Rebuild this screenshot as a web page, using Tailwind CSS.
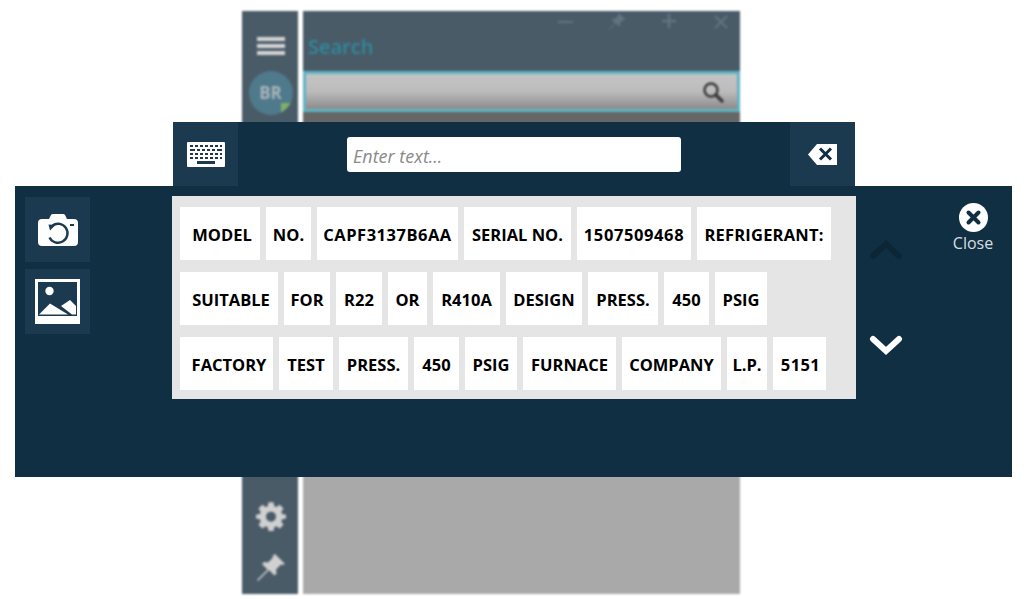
<!DOCTYPE html>
<html lang="en">

<head>
    <meta charset="UTF-8">
    <title>Search keyboard</title>
    <script src="https://cdn.jsdelivr.net/npm/@tailwindcss/browser@4"></script>
</head>

<body class="bg-white">
    <div class="relative w-[1024px] h-[599px] overflow-hidden bg-white font-['Open_Sans',sans-serif]">

        <!-- Blurred window behind the overlay -->
        <div class="absolute left-[242px] top-[11px] w-[498px] h-[583px] flex gap-[5px] blur-[1.2px]">
            <div class="w-[56px] bg-[#4a5b68] flex flex-col items-center">
                <div class="mt-[26px] ml-[1px] w-[28px] flex flex-col gap-[3px]">
                    <div class="h-[4px] bg-[#d4d4d4]"></div>
                    <div class="h-[4px] bg-[#d4d4d4]"></div>
                    <div class="h-[4px] bg-[#d4d4d4]"></div>
                </div>
                <div class="relative mt-[16px] ml-[1px] w-[44px] h-[44px] rounded-full overflow-hidden bg-[#4f7a8c] flex items-center justify-center text-[17px] font-bold text-[#a9b4ba]">
                    BR
                    <div class="absolute left-[32px] top-[32px] w-[14px] h-[14px] bg-[#7fae6a]"></div>
                </div>
                <div class="flex-1"></div>
                <svg class="w-[30px] h-[30px] mb-[22px] ml-[2px] text-[#d0d0d0]" viewBox="0 0 24 24" fill="currentColor">
                    <path fill-rule="evenodd" d="M10 1h4l.6 3.1 1.7.7L19 3l3 3-1.800 2.700.7 1.700L24 11v3l-3.100.6-.7 1.700L22 19l-3 3-2.700-1.800-1.700.7L14 24h-4l-.6-3.100-1.700-.7L5 22l-3-3 1.800-2.700-.7-1.700L0 14v-3l3.100-.6.7-1.700L2 6l3-3 2.700 1.800 1.700-.7zM12 8.500a4 4 0 1 0 0 8 4 4 0 0 0 0-8z" />
                </svg>
                <svg class="w-[30px] h-[30px] mb-[11px] ml-[2px] text-[#d0d0d0]" viewBox="0 0 30 30" fill="currentColor">
                    <path d="M19 1l10 10-2.500 1-1.500-.5-5 5 .5 4-2 2-5.500-5.500L2 28l-1-1 10.500-10.500L6 11l2-2 4 .5 5-5-.5-1.500z" />
                </svg>
            </div>
            <div class="flex-1 flex flex-col bg-[#a9a9a9]">
                <div class="relative h-[60px] bg-[#4a5b68]">
                    <div class="absolute left-[5px] top-[21px] text-[20px] leading-[30px] font-semibold text-[#2f8a9c]">Search</div>
                    <div class="absolute left-[255px] top-[10px] w-[15px] h-[2px] bg-[#5f7480]"></div>
                    <svg class="absolute left-[305px] top-[2px] w-[18px] h-[18px] text-[#5f7480]" viewBox="0 0 30 30" fill="currentColor">
                        <path d="M19 1l10 10-2.500 1-1.500-.5-5 5 .5 4-2 2-5.500-5.500L2 28l-1-1 10.500-10.500L6 11l2-2 4 .5 5-5-.5-1.500z" />
                    </svg>
                    <svg class="absolute left-[358px] top-[2px] w-[16px] h-[16px] text-[#5f7480]" viewBox="0 0 16 16" fill="none" stroke="currentColor" stroke-width="2.500">
                        <path d="M8 1v14M1 8h14" />
                    </svg>
                    <svg class="absolute left-[411px] top-[4px] w-[14px] h-[14px] text-[#5f7480]" viewBox="0 0 14 14" fill="none" stroke="currentColor" stroke-width="2">
                        <path d="M1 1l12 12M13 1L1 13" />
                    </svg>
                </div>
                <div class="h-[41px] border-[3px] border-[#5fb2c4] bg-linear-to-b from-[#c4c4c4] via-[#bcbcbc] to-[#8c8c8c] flex items-center justify-end pr-[12px]">
                    <svg class="w-[24px] h-[24px] text-[#3a3a3a]" viewBox="0 0 24 24" fill="none" stroke="currentColor">
                        <circle cx="10" cy="10" r="6.500" stroke-width="2.500" />
                        <path d="M15 15l6 6" stroke-width="3.500" stroke-linecap="round" />
                    </svg>
                </div>
                <div class="h-[12px] bg-[#666666]"></div>
            </div>
        </div>

        <!-- Text entry bar -->
        <div class="absolute left-[173px] top-[122px] w-[682px] h-[65px] bg-[#112f42] flex items-center justify-between">
            <div class="w-[65px] h-[65px] bg-[#1b3a4f] flex items-center justify-center">
                <svg class="w-[38px] h-[25px]" viewBox="0 0 38 25">
                    <rect width="38" height="25" rx="1" fill="#ffffff" />
                    <g fill="#1b3a4f">
                        <path d="M3 3h3v2H3zM8 3h3v2H8zM13 3h3v2h-3zM18 3h3v2h-3zM23 3h3v2h-3zM28 3h3v2h-3zM33 3h2v2h-2z" />
                        <path d="M3 7h5v2H3zM10 7h3v2h-3zM15 7h3v2h-3zM20 7h3v2h-3zM25 7h3v2h-3zM30 7h5v2h-5z" />
                        <path d="M3 11h3v2H3zM8 11h3v2H8zM13 11h3v2h-3zM18 11h3v2h-3zM23 11h3v2h-3zM28 11h3v2h-3zM33 11h2v2h-2z" />
                        <path d="M3 15h3v2H3zM8 15h3v2H8zM13 15h3v2h-3zM18 15h3v2h-3zM23 15h3v2h-3zM28 15h3v2h-3zM33 15h2v2h-2z" />
                        <path d="M10 19h18v3H10z" />
                    </g>
                </svg>
            </div>
            <div class="w-[334px] h-[35px] rounded-[3px] bg-white flex items-center pl-[6px] pt-[3px] text-[18px] italic text-[#8a8a8a]">Enter text...</div>
            <div class="w-[65px] h-[65px] bg-[#1b3a4f] flex items-center justify-center">
                <svg class="w-[29px] h-[21px]" viewBox="0 0 29 21">
                    <path d="M9 0h20v21H9L0 10.500z" fill="#ffffff" />
                    <path d="M12 4.500l11 11M23 4.500l-11 11" stroke="#112f42" stroke-width="3" fill="none" />
                </svg>
            </div>
        </div>

        <!-- Main panel -->
        <div class="absolute left-[15px] top-[186px] w-[997px] h-[291px] bg-[#112f42] flex">
            <div class="w-[157px] pl-[10px] pt-[11px] flex flex-col gap-[7px]">
                <div class="w-[65px] h-[65px] bg-[#1b3a4f] flex items-center justify-center">
                    <svg class="w-[40px] h-[32px]" viewBox="0 0 40 32">
                        <path d="M4 5h7l2-4q.5-1 2-1h10q1.500 0 2 1l2 4h7q4 0 4 4v19q0 4-4 4H4q-4 0-4-4V9q0-4 4-4z" fill="#ffffff" />
                        <path d="M14.500 11.500a9.500 9.500 0 1 1-3 12" fill="none" stroke="#1b3a4f" stroke-width="2.400" />
                        <path d="M10.500 10.500l7 .5-5.500 5.500z" fill="#1b3a4f" />
                        <rect x="32" y="10" width="4" height="2" fill="#1b3a4f" />
                    </svg>
                </div>
                <div class="w-[65px] h-[65px] bg-[#1b3a4f] flex items-center justify-center">
                    <svg class="w-[45px] h-[45px]" viewBox="0 0 45 45">
                        <rect width="45" height="45" fill="#ffffff" />
                        <rect x="3" y="3" width="39" height="34" fill="#1b3a4f" />
                        <circle cx="14.500" cy="12" r="4.200" fill="#ffffff" />
                        <path d="M4 35.500l11-11 18 11z" fill="#ffffff" />
                        <path d="M26 27l9-6 6 6v8.500h-4z" fill="#ffffff" />
                    </svg>
                </div>
            </div>

            <!-- Recognised words -->
            <div class="mt-[10px] w-[684px] h-[203px] bg-[#e5e5e5] pt-[11px] pl-[8px] flex flex-col gap-[12px] text-[16.500px] font-bold text-black">
                <div class="flex gap-[6px]">
                    <div class="w-[80px] h-[53px] bg-white flex items-center justify-center pt-[3px] pl-[4px]">MODEL</div>
                    <div class="w-[45px] h-[53px] bg-white flex items-center justify-center pt-[3px]">NO.</div>
                    <div class="w-[141px] h-[53px] bg-white flex items-center justify-center pt-[3px] tracking-[0.5px]">CAPF3137B6AA</div>
                    <div class="w-[107px] h-[53px] bg-white flex items-center justify-center pt-[3px]">SERIAL NO.</div>
                    <div class="w-[114px] h-[53px] bg-white flex items-center justify-center pt-[3px] tracking-[0.6px]">1507509468</div>
                    <div class="w-[134px] h-[53px] bg-white flex items-center justify-center pt-[3px] tracking-[0.2px]">REFRIGERANT:</div>
                </div>
                <div class="flex gap-[6px]">
                    <div class="w-[98px] h-[53px] bg-white flex items-center justify-center pt-[3px] pl-[4px]">SUITABLE</div>
                    <div class="w-[46px] h-[53px] bg-white flex items-center justify-center pt-[3px]">FOR</div>
                    <div class="w-[46px] h-[53px] bg-white flex items-center justify-center pt-[3px]">R22</div>
                    <div class="w-[39px] h-[53px] bg-white flex items-center justify-center pt-[3px]">OR</div>
                    <div class="w-[67px] h-[53px] bg-white flex items-center justify-center pt-[3px]">R410A</div>
                    <div class="w-[76px] h-[53px] bg-white flex items-center justify-center pt-[3px]">DESIGN</div>
                    <div class="w-[70px] h-[53px] bg-white flex items-center justify-center pt-[3px]">PRESS.</div>
                    <div class="w-[45px] h-[53px] bg-white flex items-center justify-center pt-[3px]">450</div>
                    <div class="w-[52px] h-[53px] bg-white flex items-center justify-center pt-[3px]">PSIG</div>
                </div>
                <div class="flex gap-[6px]">
                    <div class="w-[93px] h-[53px] bg-white flex items-center justify-center pt-[3px] pl-[5px]">FACTORY</div>
                    <div class="w-[54px] h-[53px] bg-white flex items-center justify-center pt-[3px]">TEST</div>
                    <div class="w-[69px] h-[53px] bg-white flex items-center justify-center pt-[3px]">PRESS.</div>
                    <div class="w-[45px] h-[53px] bg-white flex items-center justify-center pt-[3px]">450</div>
                    <div class="w-[52px] h-[53px] bg-white flex items-center justify-center pt-[3px]">PSIG</div>
                    <div class="w-[93px] h-[53px] bg-white flex items-center justify-center pt-[3px]">FURNACE</div>
                    <div class="w-[99px] h-[53px] bg-white flex items-center justify-center pt-[3px]">COMPANY</div>
                    <div class="w-[40px] h-[53px] bg-white flex items-center justify-center pt-[3px]">L.P.</div>
                    <div class="w-[53px] h-[53px] bg-white flex items-center justify-center pt-[3px] pl-[2px] tracking-[0.4px]">5151</div>
                </div>
            </div>

            <!-- Scroll arrows -->
            <div class="w-[60px] h-[180px] pl-[13px] pt-[52px] flex flex-col gap-[75px]">
                <svg class="w-[34px] h-[22px]" viewBox="0 0 34 22" fill="none" stroke="#0c2636" stroke-width="6" stroke-linecap="round">
                    <path d="M4 18L17 6l13 12" />
                </svg>
                <svg class="w-[34px] h-[22px]" viewBox="0 0 34 22" fill="none" stroke="#ffffff" stroke-width="6" stroke-linecap="round">
                    <path d="M4 4l13 12L30 4" />
                </svg>
            </div>

            <!-- Close -->
            <div class="flex-1 pt-[17px] pl-[18px] flex flex-col items-center">
                <svg class="w-[29px] h-[29px]" viewBox="0 0 29 29">
                    <circle cx="14.500" cy="14.500" r="14.500" fill="#ffffff" />
                    <path d="M9.500 9.500l10 10M19.500 9.500l-10 10" stroke="#112f42" stroke-width="4" stroke-linecap="round" />
                </svg>
                <div class="text-[16px] leading-[22px] text-[#d8dde0]">Close</div>
            </div>
        </div>
    </div>
</body>

</html>
